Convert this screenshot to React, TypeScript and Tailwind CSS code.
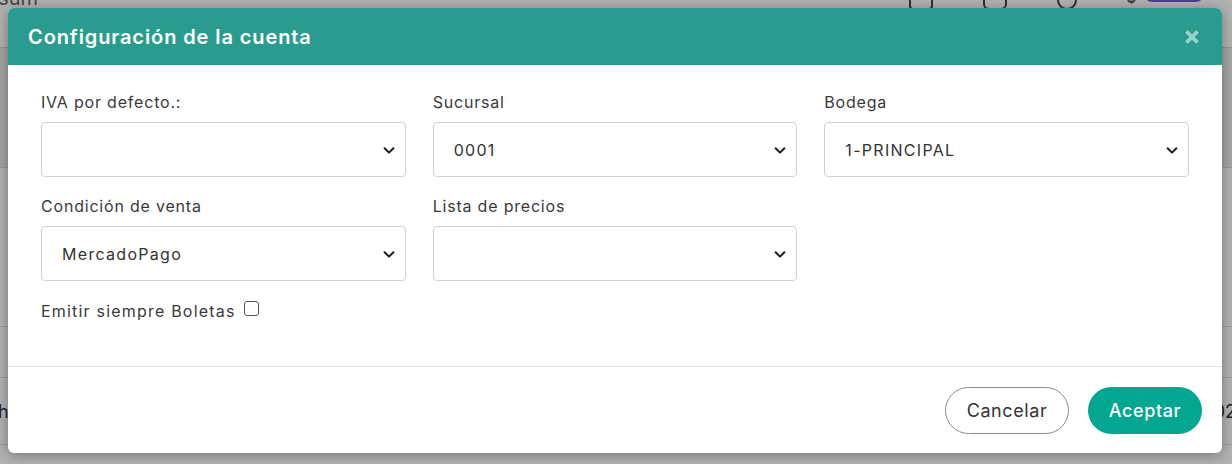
import React, { useState } from 'react';

const ChevronDown: React.FC = () => (
    <svg width="14" height="14" viewBox="0 0 16 16" fill="none" className="text-[#222]">
        <path d="M3 6l5 5 5-5" stroke="currentColor" strokeWidth="2.4" strokeLinecap="round" strokeLinejoin="round" />
    </svg>
);

const SelectField: React.FC<{ label: string; value?: string }> = ({ label, value }) => (
    <div className="flex flex-col">
        <label className="text-[16px] leading-6 text-[#3a3a3a] tracking-[0.8px] mb-2">{label}</label>
        <div className="h-[55px] border border-[#d0d0d0] rounded-[4px] bg-white flex items-center justify-between pl-5 pr-[9px]">
            <span className="text-[16px] text-[#333] tracking-[1.3px]">{value}</span>
            <ChevronDown />
        </div>
    </div>
);

const App: React.FC = () => {
    const [boletas, setBoletas] = useState(false);

    return (
        <div className="relative h-[464px] w-full overflow-hidden bg-white font-['Inter','Open_Sans',sans-serif]">
            {/* Page behind the modal */}
            <div className="-mt-[14px]">
                <div className="h-[62px] border-b border-[#d6d6d6] flex items-start justify-between pl-[2px] pr-[20px]">
                    <span className="text-[20px] text-[#666] -ml-[28px] leading-6">Resum</span>
                    <div className="flex items-start gap-[50px] text-[#555] pr-2">
                        <div className="w-6 h-6 border-2 border-[#444] rounded-sm"></div>
                        <div className="w-6 h-6 border-2 border-[#444] rounded-md"></div>
                        <div className="w-5 h-6 border-2 border-[#444] rounded-full"></div>
                        <div className="flex items-start gap-2">
                            <span className="text-[14px] font-bold leading-6">$</span>
                            <div className="w-[60px] h-[16px] rounded-full bg-[#6d5dd3]"></div>
                        </div>
                    </div>
                </div>
                <div className="h-[120px] bg-[#ececec] border-b border-[#dedede]"></div>
                <div className="h-[159px] border-b border-[#dedede]"></div>
                <div className="h-[51px] border-b border-[#dedede]"></div>
                <div className="h-[67px] border-b border-[#dedede] flex items-center justify-between text-[18px] text-[#333]">
                    <span className="-ml-[2px]">h</span>
                    <span className="-mr-[4px]">02</span>
                </div>
            </div>

            {/* Overlay */}
            <div className="absolute inset-0 bg-black/30 p-2">
                <div className="w-[1214px] bg-white rounded-[6px] overflow-hidden shadow-[0_2px_14px_rgba(0,0,0,0.35)]">
                    {/* Header */}
                    <div className="h-[57px] bg-[#2a9c8f] flex items-center justify-between pl-5 pr-[22px]">
                        <h2 className="text-[20px] font-semibold text-white tracking-[0.9px]">Configuración de la cuenta</h2>
                        <svg width="16" height="16" viewBox="0 0 16 16" className="text-white/55">
                            <path d="M2.5 2.5l11 11M13.5 2.5l-11 11" stroke="currentColor" strokeWidth="3.6" strokeLinecap="butt" />
                        </svg>
                    </div>

                    {/* Body */}
                    <div className="pt-[25px] pb-[43px] px-[33px] border-b border-[#dfe3e8]">
                        <div className="grid grid-cols-3 gap-x-[27px] gap-y-[17px]">
                            <SelectField label="IVA por defecto.:" />
                            <SelectField label="Sucursal" value="0001" />
                            <SelectField label="Bodega" value="1-PRINCIPAL" />
                            <SelectField label="Condición de venta" value="MercadoPago" />
                            <SelectField label="Lista de precios" />
                        </div>
                        <label className="mt-[18px] flex items-center gap-[8px] text-[16px] leading-6 text-[#3a3a3a] tracking-[1.2px]">
                            Emitir siempre Boletas
                            <input
                                type="checkbox"
                                checked={boletas}
                                onChange={(e) => setBoletas(e.target.checked)}
                                className="appearance-none w-[15px] h-[15px] border border-[#555] rounded-[3px] bg-white -mt-[5px]"
                            />
                        </label>
                    </div>

                    {/* Footer */}
                    <div className="flex justify-end items-center gap-[19px] pt-5 pb-[19px] pr-5">
                        <button className="h-[47px] w-[124px] rounded-full border border-[#8a8a8a] bg-white text-[18px] text-[#333] tracking-[0.6px]">
                            Cancelar
                        </button>
                        <button className="h-[47px] w-[114px] rounded-full bg-[#03a690] text-[18px] font-medium text-white tracking-[0.6px]">
                            Aceptar
                        </button>
                    </div>
                </div>
            </div>
        </div>
    );
};

export default App;
